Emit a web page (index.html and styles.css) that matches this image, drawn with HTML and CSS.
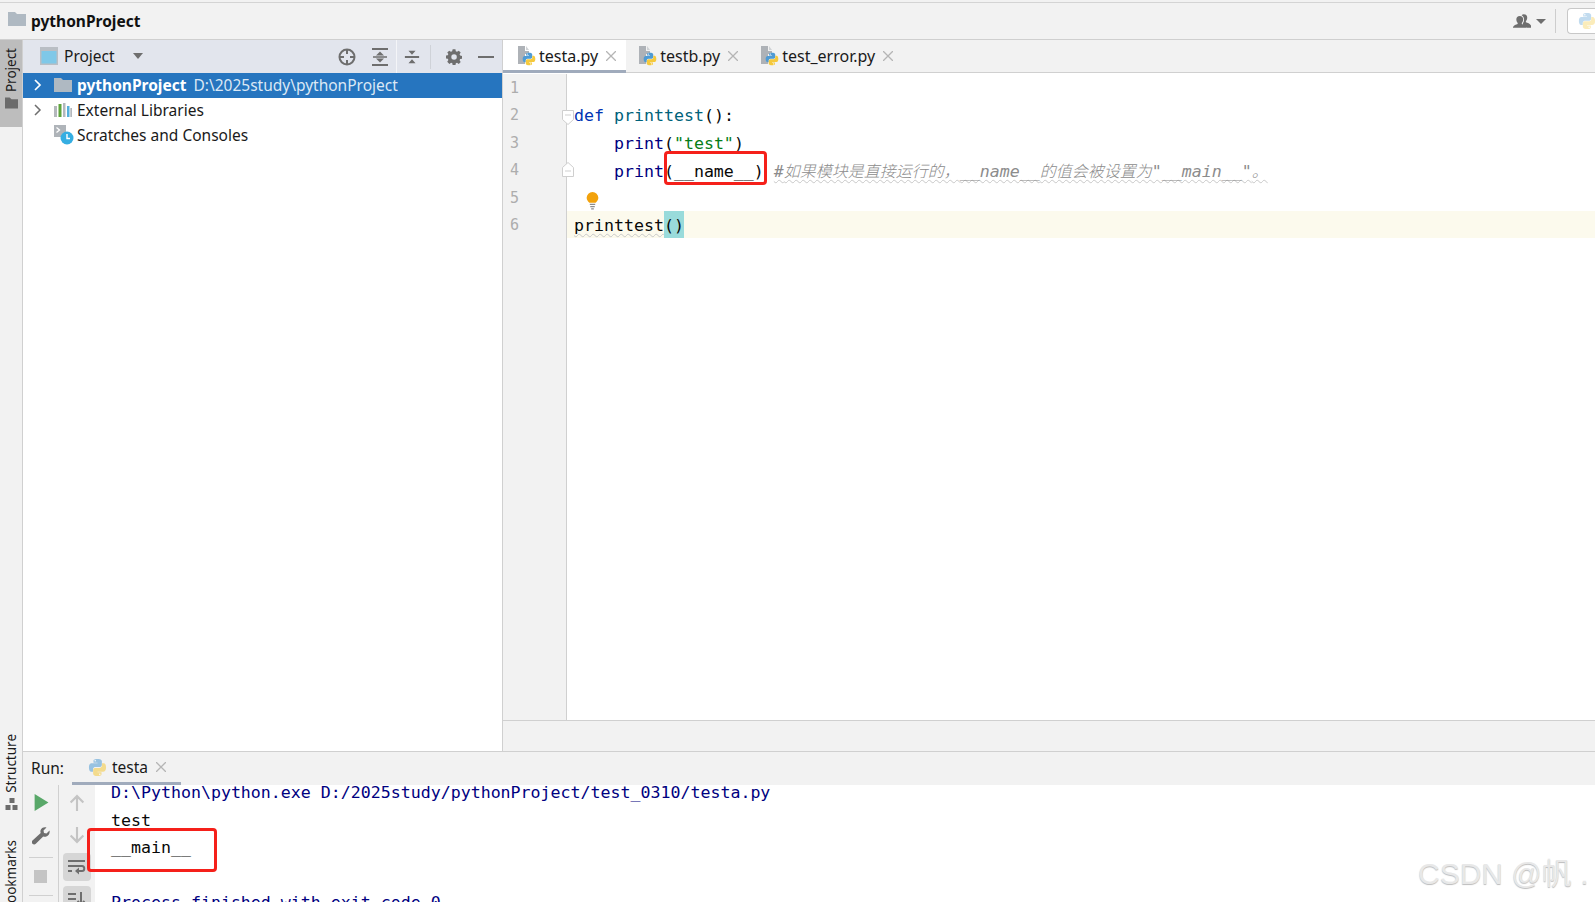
FILE: index.html
```html
<!DOCTYPE html>
<html lang="en">
<head>
    <meta charset="UTF-8">
    <title>pythonProject</title>
    <link rel="stylesheet" href="styles.css">
</head>
<body>
    <svg class="defs" width="0" height="0">
        <symbol id="py" viewBox="0 0 20 20">
            <path fill="#4f9bd4" d="M9.900 1C5.500 1 5.800 2.900 5.800 2.900V5H10v.6H4.100S1 5.300 1 10s2.700 4.500 2.700 4.500h1.600v-2.200s-.1-2.700 2.700-2.700h4.100s2.500 0 2.500-2.500V3.500S15 1 9.900 1z"/>
            <circle cx="7.600" cy="3" r=".8" fill="#fff"/>
            <path fill="#f5c93c" d="M10.100 19c4.400 0 4.100-1.900 4.100-1.900V15H10v-.6h5.900s3.100.3 3.100-4.400-2.700-4.500-2.700-4.500h-1.600v2.200s.1 2.700-2.700 2.700H7.900s-2.500 0-2.500 2.500v3.100S5 19 10.100 19z"/>
            <circle cx="12.400" cy="17" r=".8" fill="#fff"/>
        </symbol>
        <symbol id="pyfile" viewBox="0 0 20 20">
            <path fill="#aeb2b7" d="M2 0h7v5h4v3H9v10H2z"/>
            <path fill="#cfd2d5" d="M10 0l3 4h-3z"/>
            <use href="#py" x="6" y="6" width="14" height="14"/>
        </symbol>
    </svg>

    <div class="titlebar">
        <div class="crumb">
            <svg class="icon-folder" viewBox="0 0 18 14"><path fill="#afb9c2" d="M0 0h7l2 2h9v12H0z"/></svg>
            <span>pythonProject</span>
        </div>
        <div class="title-right">
            <svg class="icon-user" viewBox="0 0 20 16"><path fill="#6e6e6e" d="M12 0c2.500 0 3.800 1.600 3.800 3.800 0 1.700-.7 3-1.500 3.800v1.200c1.800.6 4.500 1.500 5.700 3.600V15h-4.500c-1.300-2.300-3.400-3.200-4.500-3.600V9.800C11.800 8.800 12.300 7.500 12.300 6c0-2.300-1-4-2.700-4.900C10.200.4 11 0 12 0zM7.500 2C10 2 11.300 3.600 11.300 5.800c0 1.700-.7 3-1.500 3.800v1.200c2 .6 4.400 1.600 5.200 3.200v1H0v-1c.8-1.600 3.200-2.600 5.200-3.200V9.600C4.400 8.800 3.700 7.500 3.700 5.800 3.700 3.600 5 2 7.500 2z"/></svg>
            <span class="caret caret-small"></span>
            <span class="title-sep"></span>
            <div class="run-config"><svg class="icon-py-faded"><use href="#py"/></svg></div>
        </div>
    </div>

    <div class="workspace">
        <div class="stripe">
            <div class="stripe-top">
                <div class="stripe-btn">
                    <span class="vtext">Project</span>
                    <svg class="icon-stripe" viewBox="0 0 14 12"><path fill="#6b6b6b" d="M0 0h5l2 2h7v10H0z"/></svg>
                </div>
            </div>
            <div class="stripe-bottom">
                <div class="stripe-item">
                    <span class="vtext">Structure</span>
                    <svg class="icon-stripe" viewBox="0 0 12 12"><path fill="#6b6b6b" d="M4 0h5v5H4zM0 7h5v5H0zM7 7h5v5H7z"/></svg>
                </div>
                <div class="stripe-item stripe-bookmarks">
                    <span class="vtext">Bookmarks</span>
                </div>
            </div>
        </div>

        <div class="main">
            <div class="panes">
                <div class="project">
                    <div class="project-head">
                        <div class="project-title">
                            <svg class="icon-view" viewBox="0 0 18 18"><rect width="18" height="18" fill="#b9bec4"/><rect x="1.500" y="4" width="15" height="12.500" fill="#7fc8e8"/></svg>
                            <span>Project</span>
                            <span class="caret"></span>
                        </div>
                        <div class="project-tools">
                            <svg class="tool tool-a" viewBox="0 0 18 18"><g fill="none" stroke="#6e6e6e" stroke-width="2"><circle cx="9" cy="9" r="7.500"/><path d="M9 1v5M9 12v5M1 9h5M12 9h5"/></g></svg>
                            <svg class="tool tool-b" viewBox="0 0 16 18"><path fill="#6e6e6e" d="M0 0h16v2H0zM0 16h16v2H0zM8 3.500L12 7.500H4zM4 10.500h8L8 14.500zM1 8.200h14v1.500H1z"/></svg>
                            <span class="tool-line"></span>
                            <svg class="tool tool-c" viewBox="0 0 16 18"><path fill="#6e6e6e" d="M0 8h16v2H0zM4 2h8L8 6.500zM8 11.500l4 4.500H4z"/></svg>
                            <span class="tool-sep"></span>
                            <svg class="tool tool-d" viewBox="0 0 16 16"><path fill="#6e6e6e" fill-rule="evenodd" d="M6.500 0h3l.4 2.200 1.300.6 1.900-1.200 2.100 2.100-1.200 1.900.6 1.300 2.200.4v3l-2.200.4-.6 1.300 1.200 1.900-2.100 2.100-1.900-1.200-1.300.6-.4 2.200h-3l-.4-2.200-1.300-.6-1.900 1.200L.6 13.600l1.200-1.900-.6-1.300L-1 10V7l2.200-.4.600-1.300L.6 3.700 2.700 1.600l1.900 1.200 1.300-.6zM8 5.500a3 3 0 100 6 3 3 0 000-6z" transform="translate(0.700 0.200) scale(.92)"/></svg>
                            <svg class="tool tool-e" viewBox="0 0 16 2"><path fill="#6e6e6e" d="M0 0h16v2H0z"/></svg>
                        </div>
                    </div>
                    <ul class="tree">
                        <li class="tree-row selected">
                            <svg class="chev" viewBox="0 0 8 12"><path fill="none" stroke="#fff" stroke-width="1.700" d="M1 1l5 5-5 5"/></svg>
                            <svg class="icon-folder-sm" viewBox="0 0 18 14"><path fill="#afb9c2" d="M0 0h7l2 2h9v12H0z"/></svg>
                            <b>pythonProject</b><span class="tree-path">D:\2025study\pythonProject</span>
                        </li>
                        <li class="tree-row">
                            <svg class="chev" viewBox="0 0 8 12"><path fill="none" stroke="#6e6e6e" stroke-width="1.500" d="M1 1l5 5-5 5"/></svg>
                            <svg class="icon-folder-sm" viewBox="0 0 18 14"><path fill="#b4b8bd" d="M0 3h3v11H0z"/><path fill="#5fa53c" d="M4.500 1h3v13h-3z"/><path fill="#b4b8bd" d="M9 0h2.500v14H9z"/><path fill="#55b0dc" d="M13 3h2.500v11H13z"/><path fill="#b4b8bd" d="M16.300 5H18v9h-1.700z"/></svg>
                            <span>External Libraries</span>
                        </li>
                        <li class="tree-row">
                            <span class="chev-space"></span>
                            <svg class="icon-scratch" viewBox="0 0 20 20"><path fill="#afb4b9" d="M0 0h12v9l-3 3H0z"/><path fill="none" stroke="#fff" stroke-width="1.300" d="M2.500 2.500l3 2.500-3 2.500"/><circle cx="13" cy="13" r="6.500" fill="#35aee2"/><path fill="none" stroke="#fff" stroke-width="1.400" d="M13 9v4.500h3"/></svg>
                            <span>Scratches and Consoles</span>
                        </li>
                    </ul>
                </div>

                <div class="editor">
                    <div class="tabs">
                        <div class="tab active">
                            <svg class="icon-file"><use href="#pyfile"/></svg>
                            <span>testa.py</span>
                            <svg class="close" viewBox="0 0 10 10"><path stroke="#b5b5b5" stroke-width="1.300" d="M0 0l10 10M10 0L0 10"/></svg>
                        </div>
                        <div class="tab">
                            <svg class="icon-file"><use href="#pyfile"/></svg>
                            <span>testb.py</span>
                            <svg class="close" viewBox="0 0 10 10"><path stroke="#b5b5b5" stroke-width="1.300" d="M0 0l10 10M10 0L0 10"/></svg>
                        </div>
                        <div class="tab">
                            <svg class="icon-file"><use href="#pyfile"/></svg>
                            <span>test_error.py</span>
                            <svg class="close" viewBox="0 0 10 10"><path stroke="#b5b5b5" stroke-width="1.300" d="M0 0l10 10M10 0L0 10"/></svg>
                        </div>
                    </div>
                    <div class="code-area">
                        <div class="line"><span class="ln">1</span><span class="code"></span></div>
                        <div class="line"><span class="ln">2</span><span class="code"><span class="kw">def</span> <span class="fn">printtest</span>():</span>
                            <svg class="fold fold-open" viewBox="0 0 12 16"><path fill="#fff" stroke="#cfcfcf" d="M.5 .5h11v9l-5.500 5-5.500-5z"/><path stroke="#cfcfcf" d="M3 5h6"/></svg>
                        </div>
                        <div class="line"><span class="ln">3</span><span class="code">    <span class="call">print</span>(<span class="str">"test"</span>)</span></div>
                        <div class="line"><span class="ln">4</span><span class="code">    <span class="call">print</span>(__name__) <span class="comment">#<span class="cjk">如果模块是直接运行的，</span>__name__<span class="cjk">的值会被设置为</span>"__main__"<span class="cjk">。</span></span></span>
                            <svg class="fold fold-end" viewBox="0 0 12 16"><path fill="#fff" stroke="#cfcfcf" d="M.5 15.500h11v-9l-5.500-5-5.500 5z"/><path stroke="#cfcfcf" d="M3 10h6"/></svg>
                        </div>
                        <div class="line"><span class="ln">5</span><span class="code"></span>
                            <svg class="bulb" viewBox="0 0 14 20"><path fill="#f2a20c" d="M7 0a6.500 6.500 0 00-6.500 6.500c0 2.500 1.500 4 3 5.500h7c1.500-1.500 3-3 3-5.500A6.500 6.500 0 007 0z"/><path fill="#8c8c8c" d="M4 13h6v1.500H4zM4.500 15.500h5V17h-5zM5.500 18h3v1.500h-3z"/></svg>
                        </div>
                        <div class="line current"><span class="ln">6</span><span class="code"><span class="wavy">printtest</span><span class="paren">()</span></span></div>
                        <div class="gutter-fill"></div>
                        <div class="redbox redbox-name"></div>
                    </div>
                    <div class="editor-foot"></div>
                </div>
            </div>

            <div class="run">
                <div class="run-head">
                    <span class="run-label">Run:</span>
                    <div class="run-tab">
                        <svg class="icon-py-run"><use href="#py"/></svg>
                        <span>testa</span>
                        <svg class="close" viewBox="0 0 10 10"><path stroke="#b5b5b5" stroke-width="1.300" d="M0 0l10 10M10 0L0 10"/></svg>
                    </div>
                </div>
                <div class="run-body">
                    <div class="run-col">
                        <svg class="ctl" viewBox="0 0 14 16"><path fill="#59a869" d="M1 0l13 8-13 8z"/></svg>
                        <svg class="ctl ctl-wrench" viewBox="0 0 18 18"><path fill="#6e6e6e" d="M17.500 3.500l-3 3-2.500-.5-.5-2.500 3-3c-2.500-.8-5.500.5-6 3-.2 1-.1 1.800.2 2.600L.5 13.500c-1 1-.8 2.500 0 3.300s2.300 1 3.300 0l7.400-7.300c.8.300 1.700.4 2.600.2 2.500-.5 4.500-3.500 3.700-6.200z"/></svg>
                        <span class="col-sep"></span>
                        <span class="stop"></span>
                        <span class="col-sep"></span>
                    </div>
                    <div class="run-col run-col2">
                        <svg class="ctl" viewBox="0 0 14 16"><path fill="none" stroke="#c4c4c4" stroke-width="2" d="M7 16V2M1 8l6-6 6 6"/></svg>
                        <svg class="ctl" viewBox="0 0 14 16"><path fill="none" stroke="#c4c4c4" stroke-width="2" d="M7 0v14M1 8l6 6 6-6"/></svg>
                        <span class="toggle toggle-first"><svg viewBox="0 0 18 16"><path fill="none" stroke="#6e6e6e" stroke-width="2" d="M0 2h17M0 7h14c3 0 3 5 0 5H9M0 12h4"/><path fill="#6e6e6e" d="M11 8.500v7l-4-3.500z"/></svg></span>
                        <span class="toggle"><svg viewBox="0 0 18 16"><path fill="none" stroke="#6e6e6e" stroke-width="2" d="M0 2h8M0 7h8M0 12h8M13 0v12M9.500 9l3.500 3.500L16.500 9"/></svg></span>
                    </div>
                    <div class="console">
<pre class="console-text"><span class="cmd">D:\Python\python.exe D:/2025study/pythonProject/test_0310/testa.py</span>
test
__main__

<span class="cmd">Process finished with exit code 0</span></pre>
                    </div>
                    <div class="redbox redbox-main"></div>
                </div>
            </div>
        </div>
    </div>

    <div class="watermark">CSDN @帆 .</div>
</body>
</html>
```

FILE: styles.css
```css
html, body {
    margin: 0;
    height: 902px;
    overflow: hidden;
}

body {
    position: relative;
    display: flex;
    flex-direction: column;
    background-color: #f2f2f2;
    color: #1a1a1a;
    font-family: "Noto Sans", "Noto Sans CJK SC", sans-serif;
    font-size: 15.5px;
}

.defs {
    position: absolute;
}

svg {
    display: block;
    flex: none;
}

/* title bar */
.titlebar {
    height: 36px;
    margin-top: 2px;
    flex: none;
    display: flex;
    align-items: center;
    justify-content: space-between;
    border-top: 1px solid #d4d4d4;
    border-bottom: 1px solid #cfcfcf;
    padding-left: 8px;
}

.crumb {
    display: flex;
    align-items: center;
    gap: 5px;
    font-weight: 700;
    color: #111;
}

.icon-folder {
    width: 18px;
    height: 14px;
    margin-top: -4px;
}

.title-right {
    display: flex;
    align-items: center;
}

.icon-user {
    width: 18px;
    height: 15px;
}

.caret {
    display: inline-block;
    width: 0;
    height: 0;
    border-left: 5px solid transparent;
    border-right: 5px solid transparent;
    border-top: 6px solid #6e6e6e;
}

.caret-small {
    margin-left: 5px;
    border-top-width: 5px;
}

.title-sep {
    width: 1px;
    height: 24px;
    background-color: #cdcdcd;
    margin: 0 11px 0 9px;
}

.run-config {
    width: 28px;
    height: 26px;
    box-sizing: border-box;
    background-color: #fff;
    border: 1px solid #c8c8c8;
    border-right: none;
    border-radius: 4px 0 0 4px;
    padding: 3px 0 0 10px;
}

.icon-py-faded {
    width: 18px;
    height: 18px;
    opacity: 0.35;
}

/* side stripe */
.workspace {
    flex: 1;
    display: flex;
    min-height: 0;
}

.stripe {
    width: 22px;
    flex: none;
    display: flex;
    flex-direction: column;
    justify-content: space-between;
    border-right: 1px solid #d0d0d0;
    overflow: hidden;
}

.stripe-btn {
    height: 87px;
    background-color: #bdbdbd;
    display: flex;
    flex-direction: column;
    align-items: center;
    gap: 5px;
    padding-top: 8px;
    box-sizing: border-box;
}

.stripe-item {
    display: flex;
    flex-direction: column;
    align-items: center;
    gap: 5px;
}

.stripe-bookmarks {
    margin-top: 30px;
    margin-bottom: -10px;
}

.vtext {
    writing-mode: vertical-rl;
    transform: rotate(180deg);
    font-size: 13.5px;
    line-height: 22px;
}

.icon-stripe {
    width: 13px;
    height: 12px;
}

/* panes */
.main {
    flex: 1;
    min-width: 0;
    display: flex;
    flex-direction: column;
}

.panes {
    height: 711px;
    flex: none;
    display: flex;
    border-bottom: 1px solid #d0d0d0;
}

.project {
    width: 479px;
    flex: none;
    background-color: #fff;
    border-right: 1px solid #d0d0d0;
}

.project-head {
    height: 33px;
    background-color: #e2e5ed;
    display: flex;
    align-items: center;
    justify-content: space-between;
}

.project-title {
    display: flex;
    align-items: center;
    padding-left: 17px;
    padding-bottom: 2px;
}

.project-title span:first-of-type {
    margin-left: 6px;
}

.project-title .caret {
    margin-left: 18px;
}

.icon-view {
    width: 18px;
    height: 18px;
}

.project-tools {
    display: flex;
    align-items: center;
    padding-right: 8px;
    height: 33px;
}

.tool-a { width: 18px; height: 18px; }
.tool-b { width: 16px; height: 18px; margin-left: 16px; }
.tool-c { width: 16px; height: 16px; margin-left: 7px; }
.tool-d { width: 16px; height: 16px; margin-left: 16px; }
.tool-e { width: 16px; height: 2px; margin-left: 16px; }

.tool-line {
    width: 1px;
    height: 33px;
    background-color: #f4f5f8;
    margin-left: 8px;
}

.tool-sep {
    width: 1px;
    height: 24px;
    background-color: #cfd2d8;
    margin-left: 10px;
    margin-right: -1px;
}

.tree {
    list-style: none;
    margin: 0;
    padding: 0;
}

.tree-row {
    height: 25px;
    box-sizing: border-box;
    display: flex;
    align-items: center;
    padding-left: 11px;
    padding-bottom: 2px;
    white-space: nowrap;
}

.tree-row.selected {
    background-color: #2675bf;
    color: #fff;
}

.tree-path {
    margin-left: 7px;
    color: #dbe8f5;
}

.chev {
    width: 8px;
    height: 12px;
}

.chev-space {
    width: 8px;
}

.icon-folder-sm {
    width: 18px;
    height: 14px;
    margin-left: 12px;
    margin-right: 5px;
}

.icon-scratch {
    width: 20px;
    height: 20px;
    margin-left: 12px;
    margin-right: 3px;
}

/* editor */
.editor {
    flex: 1;
    min-width: 0;
    display: flex;
    flex-direction: column;
    background-color: #fff;
}

.tabs {
    height: 33px;
    flex: none;
    display: flex;
    background-color: #f2f2f2;
    border-bottom: 1px solid #d0d0d0;
    box-sizing: border-box;
    font-size: 16px;
}

.tab {
    display: flex;
    align-items: center;
    gap: 8px;
    padding: 0 10px 0 11px;
    height: 32px;
    box-sizing: border-box;
}

.tab.active {
    background-color: #fff;
    height: 33px;
    border-bottom: 3px solid #a0abbc;
    padding-left: 13px;
    padding-top: 1px;
}

.icon-file {
    width: 20px;
    height: 20px;
    margin-right: -5px;
}

.close {
    width: 10px;
    height: 10px;
}

.code-area {
    flex: 1;
    position: relative;
    display: flex;
    flex-direction: column;
    padding-top: 1px;
    font-family: "DejaVu Sans Mono", "Noto Sans CJK SC", monospace;
    font-size: 16.6px;
    min-height: 0;
}

.line {
    height: 27.4px;
    flex: none;
    display: flex;
    position: relative;
}

.line.current {
    background-color: #fcfaed;
}

.ln {
    width: 64px;
    flex: none;
    box-sizing: border-box;
    padding-left: 7px;
    background-color: #f2f2f2;
    border-right: 1px solid #d0d0d0;
    color: #adadad;
    font-size: 15px;
    line-height: 29px;
}

.code {
    padding-left: 7px;
    line-height: 29px;
    white-space: pre;
    color: #080808;
}

.kw { color: #0033b3; }
.fn { color: #00627a; }
.call { color: #000080; }
.str { color: #067d17; }

.comment {
    color: #8c8c8c;
    font-style: italic;
    text-decoration: underline wavy #c8c8c8 1px;
    text-decoration-skip-ink: none;
    text-underline-offset: 2px;
}

.cjk {
    font-family: "Noto Sans CJK SC", sans-serif;
    font-size: 16px;
    font-weight: 300;
}

.wavy {
    text-decoration: underline wavy #c8c8c8 1px;
    text-decoration-skip-ink: none;
    text-underline-offset: 2px;
}

.paren {
    display: inline-block;
    height: 27px;
    background-color: #99dbdb;
}

.gutter-fill {
    flex: 1;
    width: 64px;
    box-sizing: border-box;
    background-color: #f2f2f2;
    border-right: 1px solid #d0d0d0;
}

.fold {
    position: absolute;
    left: 59px;
    width: 12px;
    height: 16px;
}

.fold-open { top: 9px; }
.fold-end { top: 5px; }

.bulb {
    position: absolute;
    left: 83px;
    top: 8px;
    width: 13px;
    height: 18px;
}

.redbox {
    position: absolute;
    box-sizing: border-box;
    border: 3px solid #f5201a;
    border-radius: 4px;
}

.redbox-name {
    left: 161px;
    top: 78px;
    width: 103px;
    height: 34px;
}

.editor-foot {
    height: 30px;
    flex: none;
    background-color: #f2f2f2;
    border-top: 1px solid #d0d0d0;
}

/* run tool window */
.run {
    flex: 1;
    min-height: 0;
    display: flex;
    flex-direction: column;
}

.run-head {
    height: 33px;
    flex: none;
    display: flex;
    align-items: center;
    padding-left: 8px;
}

.run-label {
    width: 41px;
    flex: none;
    margin-top: -2px;
}

.run-tab {
    height: 33px;
    width: 109px;
    box-sizing: border-box;
    display: flex;
    align-items: center;
    gap: 5px;
    padding-left: 16px;
    border-bottom: 3px solid #a0abbc;
}

.icon-py-run {
    width: 19px;
    height: 19px;
    opacity: 0.55;
}

.run-tab .close {
    margin-left: 3px;
}

.run-body {
    flex: 1;
    position: relative;
    display: flex;
    min-height: 0;
}

.run-col {
    width: 36px;
    flex: none;
    box-sizing: border-box;
    display: flex;
    flex-direction: column;
    align-items: center;
    gap: 16px;
    padding-top: 9px;
    border-right: 1px solid #d0d0d0;
}

.run-col .ctl {
    width: 16px;
    height: 17px;
}

.run-col .ctl-wrench {
    width: 18px;
    height: 18px;
}

.run-col2 {
    border-right: none;
}

.col-sep {
    width: 24px;
    height: 1px;
    background-color: #d0d0d0;
    margin: -4px 0;
}

.stop {
    width: 13px;
    height: 13px;
    background-color: #c4c4c4;
}

.toggle {
    width: 28px;
    height: 28px;
    flex: none;
    box-sizing: border-box;
    padding: 6px 5px;
    background-color: #d6d6d6;
    border-radius: 4px;
    margin-top: -11px;
}

.toggle-first {
    margin-top: -7px;
}

.console {
    flex: 1;
    background-color: #fff;
    padding-left: 16px;
}

.console-text {
    margin: -6px 0 0;
    color: #080808;
    font-family: "DejaVu Sans Mono", monospace;
    font-size: 16.6px;
    line-height: 27.5px;
}

.cmd {
    color: #000080;
}

.redbox-main {
    left: 64px;
    top: 43px;
    width: 130px;
    height: 44px;
}

.watermark {
    position: absolute;
    left: 1418px;
    top: 849px;
    font-family: "Liberation Sans", "Noto Sans CJK SC", sans-serif;
    font-size: 30px;
    color: #e8e8e8;
    text-shadow: 0 1px 1px #bcbcbc;
    white-space: nowrap;
}
```
